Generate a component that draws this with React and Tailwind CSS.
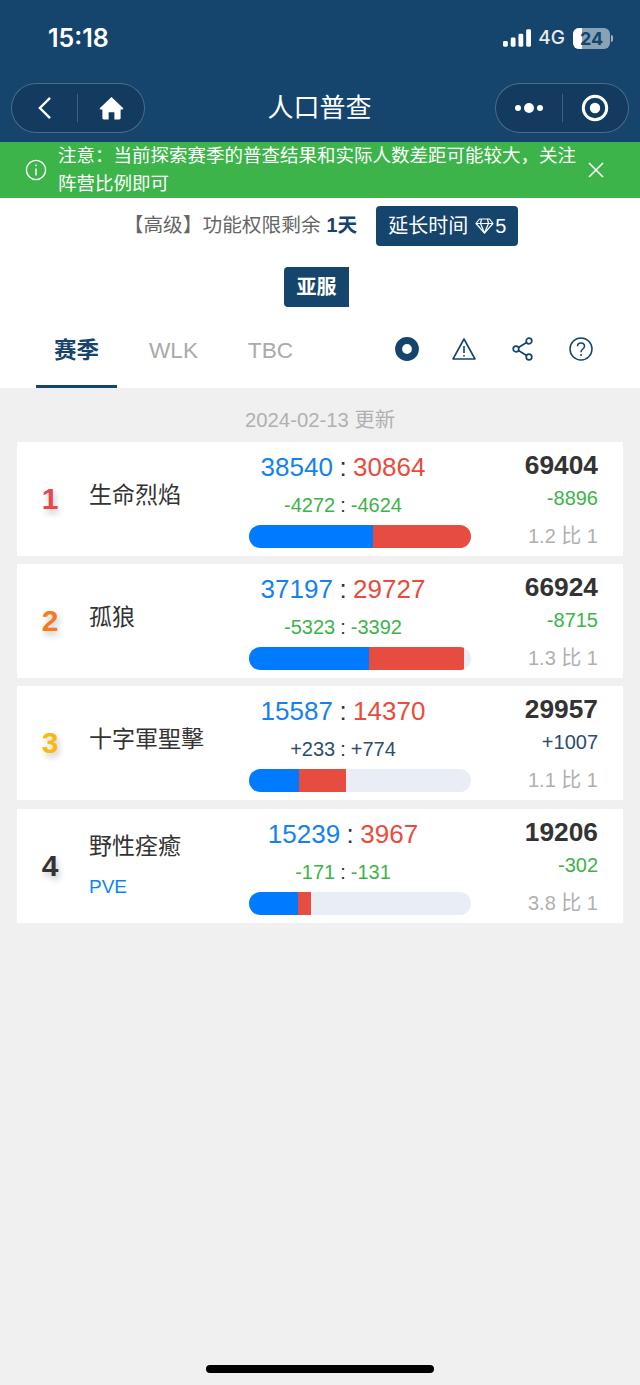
const rows = [
  { rank: '1', rc: 'text-[#e5484d]', name: '生命烈焰', a: '38540', b: '30864', da: '-4272', db: '-4624', dc: 'text-[#3cb44a]', total: '69404', dt: '-8896', ratio: '1.2 比 1', blue: 124, red: 98 },
  { rank: '2', rc: 'text-[#f47b20]', name: '孤狼', a: '37197', b: '29727', da: '-5323', db: '-3392', dc: 'text-[#3cb44a]', total: '66924', dt: '-8715', ratio: '1.3 比 1', blue: 120, red: 95 },
  { rank: '3', rc: 'text-[#fbb80f]', name: '十字軍聖擊', a: '15587', b: '14370', da: '+233', db: '+774', dc: 'text-[#2c4d6e]', total: '29957', dt: '+1007', ratio: '1.1 比 1', blue: 50, red: 47 },
  { rank: '4', rc: 'text-[#333333]', name: '野性痊癒', tag: 'PVE', a: '15239', b: '3967', da: '-171', db: '-131', dc: 'text-[#3cb44a]', total: '19206', dt: '-302', ratio: '3.8 比 1', blue: 49, red: 13 },
];

const notice = '注意\uFF1A当前探索赛季的普查结果和实际人数差距可能较大\uFF0C关注阵营比例即可';

function Card({ r }) {
  return (
    <div className="flex h-[114px] bg-white">
      <div className="w-[72px] pl-[13px] flex items-center">
        <span className={`w-[40px] text-center text-[30px] font-bold leading-none [text-shadow:2px_4px_6px_rgba(0,0,0,0.22)] ${r.rc}`}>{r.rank}</span>
      </div>
      <div className="w-[160px] flex flex-col justify-center">
        {r.tag ? (
          <div className="flex flex-col gap-[9px] mt-[2px]">
            <div className="text-[23px] leading-[32px] text-[#333333]">{r.name}</div>
            <div className="text-[19px] leading-[32px] text-[#0a84f0]">{r.tag}</div>
          </div>
        ) : (
          <div className="text-[23px] leading-[32px] text-[#333333] -mt-[8px]">{r.name}</div>
        )}
      </div>
      <div className="w-[222px] pt-[8px]">
        <div className="w-[188px] flex justify-center text-[26px] leading-[34px]">
          <span className="text-[#1482ee]">{r.a}</span>
          <span className="text-[#333333] mx-[6.5px]">:</span>
          <span className="text-[#e74c3c]">{r.b}</span>
        </div>
        <div className="w-[188px] mt-[7px] flex justify-center text-[20px] leading-[28px]">
          <span className={r.dc}>{r.da}</span>
          <span className="text-[#333333] mx-[5px]">:</span>
          <span className={r.dc}>{r.db}</span>
        </div>
        <div className="mt-[6px] h-[23px] rounded-full bg-[#e9edf5] overflow-hidden flex">
          <div className="h-full bg-[#007aff]" style={{ width: r.blue }} />
          <div className="h-full bg-[#e74c40]" style={{ width: r.red }} />
        </div>
      </div>
      <div className="flex-1 pr-[25px] pt-[7px] flex flex-col items-end">
        <div className="text-[26.3px] leading-[32px] font-bold text-[#333333]">{r.total}</div>
        <div className={`mt-[3px] text-[20px] leading-[28px] ${r.dt.startsWith('+') ? 'text-[#2c4d6e]' : 'text-[#3cb44a]'}`}>{r.dt}</div>
        <div className="mt-[10px] text-[20px] leading-[28px] text-[#b0b0b0]">{r.ratio}</div>
      </div>
    </div>
  );
}

function Capsule({ children }) {
  return (
    <div className="w-[134px] h-[50px] rounded-full border border-white/25 bg-[#123b5f] flex items-center">
      {children}
    </div>
  );
}

export default function App() {
  return (
    <div className="w-[640px] h-[1385px] flex flex-col bg-[#f0f0f0] font-['Liberation_Sans','Noto_Sans_CJK_SC',sans-serif] overflow-hidden">
      <div className="h-[142px] bg-[#15446d] text-white shrink-0">
        <div className="h-[76px] flex items-center justify-between pl-[48px] pr-[27px]">
          <span className="font-['Inter',sans-serif] text-[25px] font-semibold mt-[2px]">15:18</span>
          <div className="flex items-center">
            <svg width="28" height="18" viewBox="0 0 29 18" fill="#fff">
              <rect x="0" y="12" width="5" height="6" rx="1.5" />
              <rect x="8" y="8.5" width="5" height="9.5" rx="1.5" />
              <rect x="16" y="4.5" width="5" height="13.5" rx="1.5" />
              <rect x="24" y="0" width="5" height="18" rx="1.5" />
            </svg>
            <span className="ml-[7px] font-['Inter',sans-serif] text-[19px] font-medium text-white/90">4G</span>
            <div className="relative ml-[8px] w-[37px] h-[21px] rounded-[6px] bg-white/50 overflow-hidden flex items-center justify-center">
              <div className="absolute left-0 top-0 bottom-0 w-[9px] bg-white" />
              <span className="relative font-['Inter',sans-serif] text-[18px] font-bold text-[#15446d]">24</span>
            </div>
            <div className="ml-[1px] w-[2px] h-[7px] rounded-r bg-white/60" />
          </div>
        </div>
        <div className="h-[66px] px-[11px] pt-[7px] flex items-start justify-between">
          <Capsule>
            <div className="w-[66px] flex justify-center -ml-[1px]">
              <svg width="15" height="24" viewBox="0 0 16 26" fill="none" stroke="#fff" strokeWidth="2.6">
                <path d="M14 2 L3 13 L14 24" />
              </svg>
            </div>
            <div className="w-px h-[28px] bg-white/20" />
            <div className="flex-1 flex justify-center">
              <svg width="25" height="24" viewBox="0 0 26 25" fill="#fff">
                <path d="M13 1 L25 12.5 C25.6 13.2 25.2 14 24.3 14 H22.5 V23 C22.5 24 21.8 24.5 21 24.5 H16 V17 H10 V24.5 H5 C4.2 24.5 3.5 24 3.5 23 V14 H1.7 C0.8 14 0.4 13.2 1 12.5 Z" />
              </svg>
            </div>
          </Capsule>
          <div className="flex-1 text-center text-[26px] leading-[50px] -ml-[1px]">人口普查</div>
          <Capsule>
            <div className="w-[66px] flex justify-center">
              <svg width="30" height="12" viewBox="0 0 30 12" fill="#fff">
                <circle cx="4" cy="6" r="3" />
                <circle cx="15" cy="6" r="5" />
                <circle cx="26" cy="6" r="3" />
              </svg>
            </div>
            <div className="w-px h-[28px] bg-white/20" />
            <div className="flex-1 flex justify-center -ml-[1px]">
              <svg width="28" height="28" viewBox="0 0 28 28" fill="none">
                <circle cx="14" cy="14" r="11.7" stroke="#fff" strokeWidth="3" />
                <circle cx="14" cy="14" r="5.2" fill="#fff" />
              </svg>
            </div>
          </Capsule>
        </div>
      </div>

      <div className="h-[56px] bg-[#3cb44a] flex items-center text-white shrink-0">
        <div className="w-[58px] pl-[25px] shrink-0">
          <svg width="22" height="22" viewBox="0 0 22 22" fill="none" stroke="#fff" strokeWidth="1.4">
            <circle cx="11" cy="11" r="9.6" />
            <path d="M11 9.5 V16.5" />
            <path d="M11 5.5 V7.2" />
          </svg>
        </div>
        <div className="w-[522px] shrink-0 text-[18.5px] leading-[28px]">{notice}</div>
        <div className="pl-[8px]">
          <svg width="16" height="16" viewBox="0 0 16 16" fill="none" stroke="#fff" strokeWidth="1.6">
            <path d="M1 1 L15 15 M15 1 L1 15" />
          </svg>
        </div>
      </div>

      <div className="bg-white h-[190px] shrink-0 flex flex-col">
        <div className="pt-[8px] h-[69px] flex items-start justify-center">
          <div className="h-[40px] flex items-center text-[19.7px] text-[#666666] ml-[2px]">
            【高级】功能权限剩余
            <span className="ml-[6px] font-bold text-[#15446d]">1天</span>
          </div>
          <div className="ml-[19px] w-[142px] h-[40px] rounded-[4px] bg-[#15446d] text-white flex items-center justify-center text-[20px]">
            延长时间
            <svg className="ml-[7px]" width="19" height="16" viewBox="0 0 19 16" fill="none" stroke="#fff" strokeWidth="1.2" strokeLinejoin="round">
              <path d="M4.5 1 H14.5 L18 5.5 L9.5 15 L1 5.5 Z" />
              <path d="M1 5.5 H18 M6.5 1 L5.5 5.5 L9.5 15 L13.5 5.5 L12.5 1" />
            </svg>
            <span className="ml-[1px]">5</span>
          </div>
        </div>
        <div className="flex justify-center">
          <div className="-ml-[7px] w-[65px] h-[40px] rounded-l-[4px] bg-[#15446d] text-white font-bold text-[20px] flex items-center justify-center">亚服</div>
        </div>
        <div className="flex-1 flex items-stretch pl-[36px]">
          <div className="w-[81px] border-b-[3px] border-[#15446d] flex items-center justify-center pt-[9px] text-[22.5px] font-bold text-[#15446d]">赛季</div>
          <div className="w-[81px] ml-[16px] flex items-center justify-center pt-[6px] text-[22.7px] text-[#aaaaaa]">WLK</div>
          <div className="w-[81px] ml-[16px] flex items-center justify-center pt-[6px] text-[22.7px] text-[#aaaaaa]">TBC</div>
          <div className="flex-1 flex items-center justify-end pr-[47px] pt-[3px] gap-[34.5px] text-[#15446d]">
            <svg className="-mr-[1px]" width="24" height="24" viewBox="0 0 24 24">
              <circle cx="12" cy="12" r="8.4" fill="none" stroke="#15446d" strokeWidth="7" />
            </svg>
            <svg width="24" height="24" viewBox="0 0 24 24" fill="none" stroke="#15446d" strokeWidth="1.6" strokeLinejoin="round">
              <path d="M12 2 L23 22 H1 Z" />
              <path d="M12 9 V16" />
              <path d="M12 18 V19.6" />
            </svg>
            <svg width="24" height="24" viewBox="0 0 24 24" fill="none" stroke="#15446d" strokeWidth="1.7">
              <circle cx="5" cy="12" r="2.8" />
              <circle cx="18" cy="4" r="2.8" />
              <circle cx="18" cy="20" r="2.8" />
              <path d="M7.5 10.5 L15.6 5.5 M7.5 13.5 L15.6 18.5" />
            </svg>
            <svg width="24" height="24" viewBox="0 0 24 24" fill="none" stroke="#15446d" strokeWidth="1.5">
              <circle cx="12" cy="12" r="11" />
              <path d="M8.5 9.2 C8.5 4.8 15.5 4.8 15.5 9.2 C15.5 12 12 12 12 15.2" />
              <path d="M12 17 V19" />
            </svg>
          </div>
        </div>
      </div>

      <div className="h-[54px] shrink-0 flex items-center justify-center pt-[10px] text-[20.3px] text-[#b0b0b0]">2024-02-13 更新</div>

      <div className="mx-[17px] flex flex-col gap-[8.2px]">
        {rows.map((r) => (
          <Card key={r.rank} r={r} />
        ))}
      </div>

      <div className="flex-1 flex items-end justify-center pb-[12px]">
        <div className="w-[228px] h-[8px] rounded-full bg-black" />
      </div>
    </div>
  );
}
